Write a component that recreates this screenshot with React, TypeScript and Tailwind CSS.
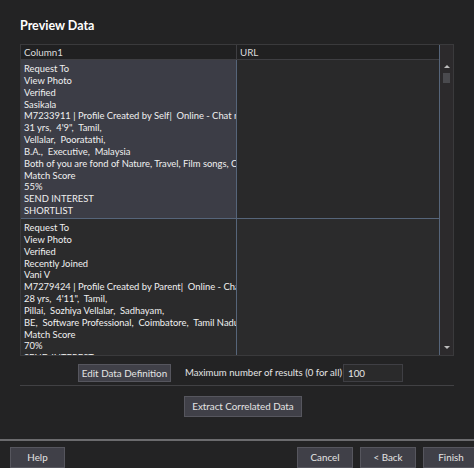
import React from "react";

const row1 = [
  "Request To",
  "View Photo",
  "Verified",
  "Sasikala",
  "M7233911 | Profile Created by Self|  Online - Chat now",
  "31 yrs,  4'9\",  Tamil,",
  "Vellalar,  Pooratathi,",
  "B.A.,  Executive,  Malaysia",
  "Both of you are fond of Nature, Travel, Film songs, Cooking",
  "Match Score",
  "55%",
  "SEND INTEREST",
  "SHORTLIST",
];

const row2 = [
  "Request To",
  "View Photo",
  "Verified",
  "Recently Joined",
  "Vani V",
  "M7279424 | Profile Created by Parent|  Online - Chat now",
  "28 yrs,  4'11\",  Tamil,",
  "Pillai,  Sozhiya Vellalar,  Sadhayam,",
  "BE,  Software Professional,  Coimbatore,  Tamil Nadu",
  "Match Score",
  "70%",
  "SEND INTEREST",
  "SHORTLIST",
];

function Btn({ children, className = "" }: { children: React.ReactNode; className?: string }) {
  return (
    <div
      className={
        "flex items-center justify-center whitespace-nowrap bg-[#404048] border border-[#56565e] text-[#e4e4e4] text-[9.8px] shrink-0 " +
        className
      }
    >
      {children}
    </div>
  );
}

export default function App() {
  return (
    <div
      className="w-[474px] h-[468px] bg-[#232324] overflow-hidden flex flex-col text-[#e6e6e6]"
      style={{ fontFamily: 'Lato, "Noto Sans", sans-serif' }}
    >
      <div className="h-[44px] pl-[20px] pt-[18px] text-[12.5px] font-bold leading-[16px] text-white">
        Preview Data
      </div>
      <div className="mx-[20px] h-[312px] border border-[#3a3a3c] flex overflow-hidden">
        <div className="flex-1 flex flex-col overflow-hidden">
          <div className="h-[15px] flex border-b border-[#3e3e42] bg-[#202021] shrink-0">
            <div className="w-[216px] pl-[3px] text-[9.8px] leading-[14px] text-[#dcdcdc] border-r border-[#3e3e42]">
              Column1
            </div>
            <div className="flex-1 pl-[3px] text-[9.8px] leading-[14px] text-[#dcdcdc]">URL</div>
          </div>
          <div className="flex-1 flex flex-col overflow-hidden">
            <div className="flex h-[159px] shrink-0 border-b border-[#56657a]">
              <div className="w-[216px] bg-[#3c3d46] pl-[3px] pt-[3px] border-r border-[#56657a] overflow-hidden">
                {row1.map((t, i) => (
                  <div key={i} className="text-[9.4px] leading-[11.85px] whitespace-pre text-[#f0f0f0]">
                    {t}
                  </div>
                ))}
              </div>
              <div className="flex-1 bg-[#29292a]" />
            </div>
            <div className="flex flex-1">
              <div className="w-[216px] bg-[#2b2b2c] pl-[3px] pt-[3px] border-r border-[#56657a] overflow-hidden">
                {row2.map((t, i) => (
                  <div key={i} className="text-[9.4px] leading-[11.85px] whitespace-pre text-[#f0f0f0]">
                    {t}
                  </div>
                ))}
              </div>
              <div className="flex-1 bg-[#2b2b2c]" />
            </div>
          </div>
        </div>
        <div className="w-[14px] bg-[#2c2a2c] border-l border-[#56657a] flex flex-col items-center shrink-0">
          <div className="h-[16px]" />
          <div className="mt-[4px] w-0 h-0 border-l-[3px] border-r-[3px] border-b-[3px] border-l-transparent border-r-transparent border-b-[#bdbdbd]" />
          <div className="mt-[5px] w-[7px] h-[10px] bg-[#4a4a4e]" />
          <div className="flex-1" />
          <div className="mb-[6px] w-0 h-0 border-l-[3px] border-r-[3px] border-t-[3px] border-l-transparent border-r-transparent border-t-[#bdbdbd]" />
        </div>
      </div>
      <div className="h-[8px]" />
      <div className="flex items-center h-[18px] pl-[78px]">
        <Btn className="w-[93px] h-[18px]">Edit Data Definition</Btn>
        <div className="ml-[14px] text-[9.6px] text-[#e4e4e4] whitespace-nowrap">Maximum number of results (0 for all)</div>
        <div className="ml-auto mr-[71px] w-[60px] h-[18px] bg-[#2a2a2b] border border-[#3f3f44] text-[9.8px] leading-[16px] pl-[4px] text-[#e6e6e6] shrink-0">
          100
        </div>
      </div>
      <div className="mt-[3px] mx-[20px] h-px bg-[#414144]" />
      <div className="mt-[10px] flex justify-center pl-[12px]">
        <Btn className="w-[118px] h-[21px]">Extract Correlated Data</Btn>
      </div>
      <div className="mt-[22px] h-[2px] bg-[#6b6b6e]" />
      <div className="mt-[6px] flex items-center pl-[10px]">
        <Btn className="w-[55px] h-[21px]">Help</Btn>
        <div className="flex-1" />
        <Btn className="w-[56px] h-[21px]">Cancel</Btn>
        <Btn className="ml-[7px] w-[56px] h-[21px]">&lt; Back</Btn>
        <Btn className="ml-[7px] w-[56px] h-[21px] mr-[-5px]">Finish</Btn>
      </div>
    </div>
  );
}
